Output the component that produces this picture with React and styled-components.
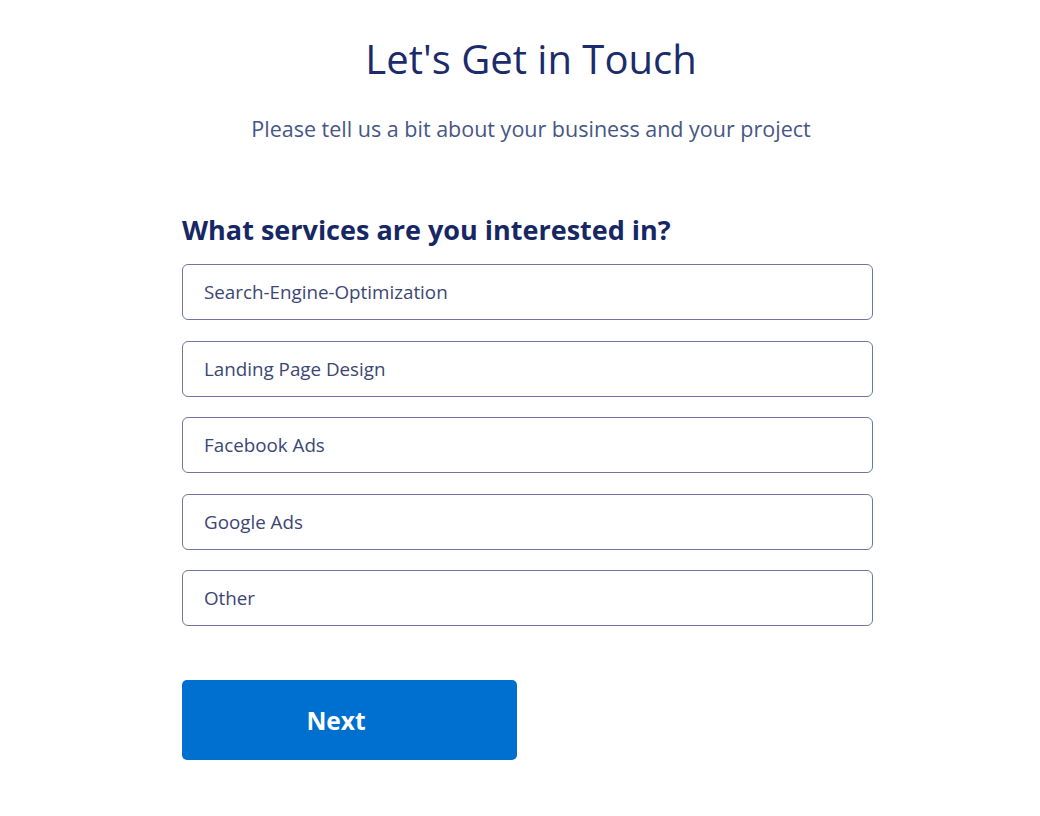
import React from "react";
import styled, { createGlobalStyle } from "styled-components";

const Global = createGlobalStyle`
  html, body { margin: 0; padding: 0; background: #fff; }
  body { font-family: "Open Sans", "Noto Sans", sans-serif; }
  * { box-sizing: border-box; }
`;

const Page = styled.div`
  width: 1040px;
  display: flex;
  flex-direction: column;
  align-items: center;
  padding-top: 32px;
`;

const Title = styled.h1`
  margin: 0;
  font-size: 40px;
  font-weight: 400;
  line-height: 54px;
  color: #1b2b6b;
  text-align: center;
  padding-left: 22px;
`;

const Subtitle = styled.p`
  margin: 28px 0 0;
  font-size: 21.5px;
  line-height: 29px;
  color: #475685;
  text-align: center;
  padding-left: 22px;
`;

const Form = styled.form`
  width: 691px;
  margin-top: 69px;
  margin-left: 15px;
  display: flex;
  flex-direction: column;
`;

const Question = styled.h2`
  margin: 0 0 16px;
  font-size: 27px;
  font-weight: 700;
  line-height: 36px;
  color: #172764;
`;

const Options = styled.div`
  display: flex;
  flex-direction: column;
  gap: 20.5px;
`;

const Option = styled.div`
  height: 56px;
  border: 1.5px solid #6f779f;
  border-radius: 6px;
  display: flex;
  align-items: center;
  padding: 0 21px;
  font-size: 18.8px;
  color: #3c4673;
  background: #fff;
`;

const NextButton = styled.button`
  margin-top: 54px;
  width: 335px;
  height: 80px;
  border: none;
  border-radius: 5px;
  background: #0070d0;
  color: #fff;
  padding: 0 27px 0 0;
  font-family: "Open Sans", "Noto Sans", sans-serif;
  font-size: 24.5px;
  font-weight: 700;
  cursor: pointer;
`;

const services = [
  "Search-Engine-Optimization",
  "Landing Page Design",
  "Facebook Ads",
  "Google Ads",
  "Other",
];

export default function App() {
  return (
    <>
      <Global />
      <Page>
        <Title>Let's Get in Touch</Title>
        <Subtitle>Please tell us a bit about your business and your project</Subtitle>
        <Form onSubmit={(e) => e.preventDefault()}>
          <Question>What services are you interested in?</Question>
          <Options>
            {services.map((s) => (
              <Option key={s}>{s}</Option>
            ))}
          </Options>
          <NextButton type="submit">Next</NextButton>
        </Form>
      </Page>
    </>
  );
}
